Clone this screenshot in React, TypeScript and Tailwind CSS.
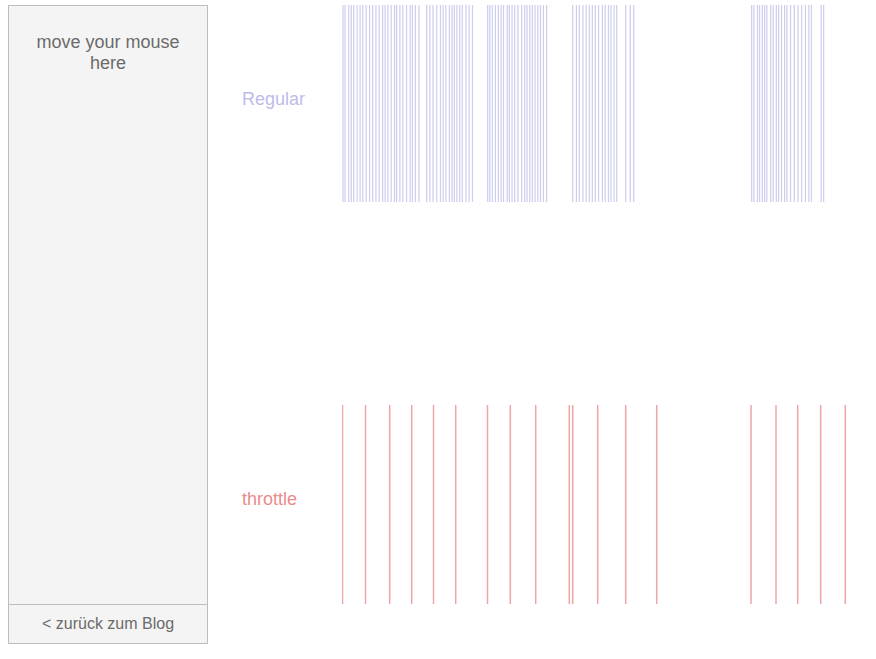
import React from 'react';

const FONT = { fontFamily: '"Liberation Sans", Arial, sans-serif' };

// deterministic pseudo-random so the "mousemove" ticks look the same every render
function makeRng(seed: number) {
  let s = seed;
  return () => {
    s = (s * 16807) % 2147483647;
    return (s - 1) / 2147483646;
  };
}

function genTicks(groups: [number, number][], seed: number) {
  const rand = makeRng(seed);
  const out: number[] = [];
  groups.forEach(([start, end]) => {
    let x = start;
    while (x <= end) {
      out.push(x);
      x += 2 + rand() * 1.9;
    }
  });
  return out;
}

const ORIGIN = 342;

const regularTicks = genTicks(
  [
    [342.3, 420],
    [426, 475],
    [487, 548],
    [572, 617],
    [625, 626.5],
    [629.5, 635],
    [751, 812],
    [820.5, 825],
  ],
  7,
);

const throttleTicks = [
  342.5, 365.5, 389.7, 411.7, 433.5, 455.7, 487.5, 510.3, 535.7, 569.3, 572.7, 597.7, 625.7,
  656.7, 751, 776, 797.7, 820.7, 845.3,
];

function Ticks({
  ticks,
  color,
  height,
  width,
  offset,
}: {
  ticks: number[];
  color: string;
  height: number;
  width: number;
  offset: number;
}) {
  return (
    <svg width={520} height={height} className="block">
      {ticks.map((x, i) => (
        <line
          key={i}
          x1={x - ORIGIN + offset}
          x2={x - ORIGIN + offset}
          y1={0}
          y2={height}
          stroke={color}
          strokeWidth={width}
        />
      ))}
    </svg>
  );
}

export default function App() {
  return (
    <div className="flex w-[876px] h-[659px] bg-white text-[#6b6b6b]" style={FONT}>
      {/* Mouse area */}
      <div className="ml-2 mt-[5px] w-[200px] h-[639px] flex flex-col border border-[#bdbdbd] bg-[#f4f4f4]">
        <div className="flex-1 pt-[26px] px-6 text-center text-[18px] leading-[21px]">
          move your mouse here
        </div>
        <div className="h-[39px] border-t border-[#bdbdbd] flex items-center justify-center text-[16px]">
          &lt; zurück zum Blog
        </div>
      </div>

      {/* Results */}
      <div className="flex flex-col ml-[34px] mt-[5px]">
        <div className="flex items-center h-[197px]">
          <div className="w-[100px] pb-[9px] text-[18px] text-[#bcbce8]">Regular</div>
          <Ticks ticks={regularTicks} color="#cdcdee" height={197} width={1.2} offset={0.7} />
        </div>
        <div className="flex items-center h-[199px] mt-[203px]">
          <div className="w-[100px] pb-[10px] text-[18px] text-[#e98c8c]">throttle</div>
          <Ticks ticks={throttleTicks} color="#f0a4a4" height={199} width={1.5} offset={0} />
        </div>
      </div>
    </div>
  );
}
